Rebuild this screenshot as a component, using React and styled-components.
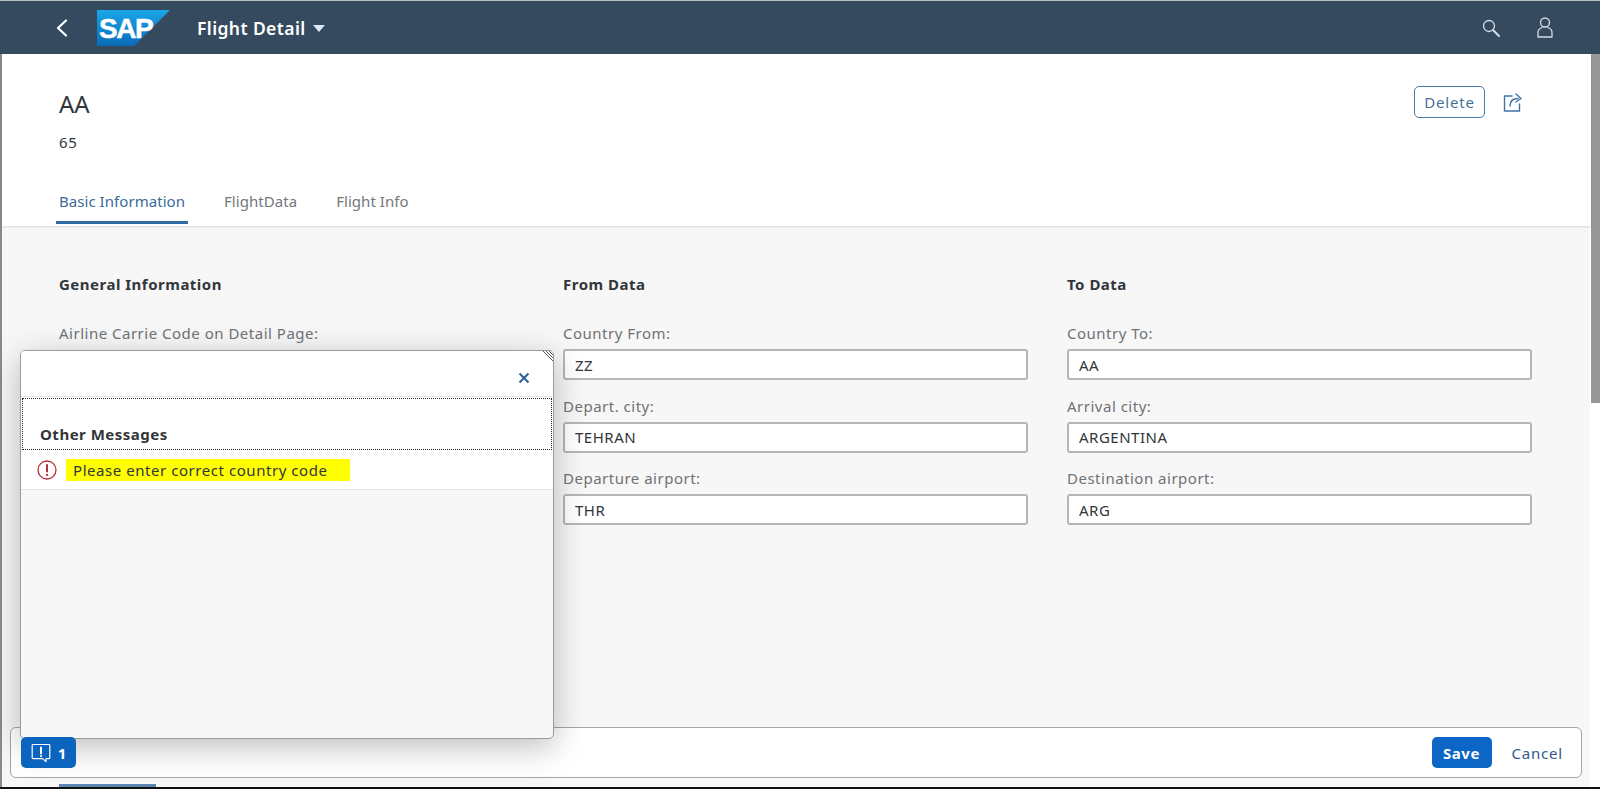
import React from "react";
import styled, { createGlobalStyle } from "styled-components";

const GlobalStyle = createGlobalStyle`
  html, body {
    margin: 0;
    padding: 0;
    background: #fff;
    overflow: hidden;
  }
  * {
    box-sizing: border-box;
  }
`;

const Shell = styled.div`
  position: relative;
  width: 1600px;
  height: 789px;
  display: flex;
  flex-direction: column;
  font-family: "Noto Sans", "Open Sans", sans-serif;
  color: #32363a;
  overflow: hidden;
  background: #fff;
  border-bottom: 2px solid #111;
`;

const TopBar = styled.header`
  height: 54px;
  flex: none;
  display: flex;
  align-items: center;
  background: #354a5f;
  border-top: 1px solid #b9c0c7;
  padding: 0 47px 0 56px;
  color: #fff;
`;

const BackIcon = styled.svg`
  width: 12px;
  height: 18px;
  margin-right: 29px;
`;

const Logo = styled.svg`
  width: 73px;
  height: 36px;
  margin-right: 27px;
`;

const AppTitle = styled.div`
  font-size: 17.5px;
  font-weight: 600;
  line-height: 24px;
  letter-spacing: 0.4px;
`;

const Caret = styled.span`
  width: 0;
  height: 0;
  margin: 2px 0 0 7px;
  border-left: 6px solid transparent;
  border-right: 6px solid transparent;
  border-top: 7px solid #dfe7f2;
`;

const TopActions = styled.div`
  margin-left: auto;
  display: flex;
  align-items: center;
  gap: 37px;
`;

const Body = styled.div`
  flex: 1;
  min-height: 0;
  display: flex;
`;

const Main = styled.main`
  flex: 1;
  min-width: 0;
  display: flex;
  flex-direction: column;
  border-left: 2px solid #8a8a8a;
`;

const ScrollTrack = styled.div`
  width: 9px;
  flex: none;
  background: #fff;
`;

const ScrollThumb = styled.div`
  height: 349px;
  background: #979797;
`;

const ObjectHeader = styled.section`
  height: 172px;
  flex: none;
  background: #fff;
  padding: 0 67px 0 54px;
  display: flex;
  flex-direction: column;
  box-shadow: 0 1px 2px rgba(0, 0, 0, 0.12);
  position: relative;
`;

const TitleRow = styled.div`
  display: flex;
  justify-content: space-between;
  padding: 33px 0 0 3px;
`;

const Title = styled.h1`
  margin: 0;
  font-size: 24px;
  font-weight: 400;
  line-height: 34px;
`;

const Subtitle = styled.div`
  font-size: 15px;
  line-height: 20px;
  margin-top: 11px;
  letter-spacing: 0.6px;
`;

const HeaderActions = styled.div`
  display: flex;
  align-items: center;
  height: 32px;
  gap: 18px;
  margin-top: -1px;
`;

const GhostButton = styled.button`
  height: 32px;
  width: 71px;
  padding: 0;
  font: inherit;
  font-size: 15px;
  letter-spacing: 0.8px;
  color: #47709b;
  background: #fff;
  border: 1.5px solid #4b7ba8;
  border-radius: 5px;
`;

const Tabs = styled.nav`
  display: flex;
  gap: 33px;
  margin-top: 35px;
`;

const Tab = styled.div`
  height: 37px;
  padding: 0 3px;
  font-size: 15px;
  line-height: 28px;
  letter-spacing: 0.05px;
  color: ${(p) => (p.$active ? "#3b6a98" : "#74777a")};
  border-bottom: 3px solid ${(p) => (p.$active ? "#2f6aa3" : "transparent")};
`;

const Content = styled.section`
  flex: 1;
  min-height: 0;
  display: flex;
  flex-direction: column;
  background: #f7f7f8;
  margin-right: 1px;
`;

const Columns = styled.div`
  display: grid;
  grid-template-columns: repeat(3, 465px);
  column-gap: 39px;
  padding: 47px 0 0 57px;
`;

const Column = styled.div`
  display: flex;
  flex-direction: column;
`;

const GroupTitle = styled.h3`
  margin: 0 0 27px;
  font-size: 15px;
  font-weight: 700;
  line-height: 22px;
  letter-spacing: 0.5px;
  color: #32363a;
`;

const Field = styled.label`
  display: flex;
  flex-direction: column;
  margin-bottom: 14.5px;
`;

const FieldLabel = styled.span`
  font-size: 15px;
  line-height: 22px;
  letter-spacing: 0.5px;
  margin-bottom: 5px;
  color: #6f7275;
`;

const Input = styled.input`
  width: 100%;
  height: 31px;
  padding: 0 10px;
  font: inherit;
  font-size: 15px;
  letter-spacing: 0.5px;
  color: #32363a;
  background: #fff;
  border: 2px solid #b4b6b8;
  border-radius: 3px;
  outline: none;
`;

const Footer = styled.footer`
  margin: auto 8px 6px 8px;
  height: 51px;
  flex: none;
  display: flex;
  align-items: center;
  padding: 0 18px 0 10px;
  background: #fff;
  border: 1px solid #a6a6a6;
  border-radius: 6px;
`;

const Sliver = styled.div`
  width: 97px;
  height: 3px;
  margin: 0 0 0 57px;
  background: #5d87b0;
`;

const MessageButton = styled.button`
  position: relative;
  z-index: 2;
  width: 55px;
  height: 31px;
  display: flex;
  align-items: center;
  justify-content: center;
  gap: 7px;
  padding: 0;
  font: inherit;
  font-size: 15px;
  font-weight: 700;
  color: #fff;
  background: #0b64bd;
  border: none;
  border-radius: 5px;
`;

const FooterActions = styled.div`
  margin-left: auto;
  display: flex;
  align-items: center;
  gap: 20px;
`;

const SaveButton = styled.button`
  width: 60px;
  height: 31px;
  padding: 0;
  font: inherit;
  font-size: 15px;
  font-weight: 700;
  letter-spacing: 0.5px;
  color: #fff;
  background: #0b66c6;
  border: none;
  border-radius: 5px;
`;

const CancelButton = styled.button`
  padding: 0;
  font: inherit;
  font-size: 15px;
  letter-spacing: 0.8px;
  color: #32598c;
  background: none;
  border: none;
`;

const Popover = styled.aside`
  position: absolute;
  z-index: 1;
  left: 20px;
  top: 350px;
  width: 534px;
  height: 389px;
  display: flex;
  flex-direction: column;
  background: #f7f7f8;
  border: 1px solid #9b9b9b;
  border-radius: 5px;
  box-shadow: 0 8px 32px rgba(0, 0, 0, 0.26);
  overflow: hidden;
`;

const Corner = styled.svg`
  position: absolute;
  top: 0;
  right: 0;
  width: 11px;
  height: 11px;
`;

const PopoverHead = styled.div`
  height: 46px;
  flex: none;
  display: flex;
  align-items: center;
  justify-content: flex-end;
  padding: 9px 23px 0 0;
  background: #fff;
  border-bottom: 1px solid #e4e4e4;
`;

const GroupFrame = styled.div`
  flex: none;
  padding: 1px 1px 0;
  background: #fff;
`;

const GroupHead = styled.div`
  height: 52px;
  display: flex;
  align-items: flex-end;
  padding: 0 0 5px 17px;
  font-size: 15px;
  font-weight: 700;
  letter-spacing: 0.5px;
  border: 1px dotted #222;
`;

const MessageItem = styled.div`
  height: 40px;
  flex: none;
  display: flex;
  align-items: center;
  padding-left: 16px;
  background: #fff;
  border-bottom: 1px solid #e5e5e5;
`;

const Highlight = styled.span`
  width: 284px;
  height: 22px;
  margin-left: 9px;
  padding-left: 7px;
  font-size: 15px;
  line-height: 22px;
  letter-spacing: 0.55px;
  color: #32363a;
  background: #ffff00;
`;

const stroke = { fill: "none", strokeLinecap: "round", strokeLinejoin: "round" };

const SearchIcon = () => (
  <svg width="18" height="18" viewBox="0 0 18 18" {...stroke} stroke="#d5dde6" strokeWidth="1.3">
    <circle cx="7" cy="7" r="5.5" />
    <path d="M11 11l6 6" strokeWidth="2" />
  </svg>
);

const UserIcon = () => (
  <svg width="16" height="21" viewBox="0 0 16 21" {...stroke} stroke="#d5dde6" strokeWidth="1.3">
    <circle cx="8" cy="5.5" r="4.5" />
    <path d="M5 10.5C2.5 11.5 1 13 1 15.5V20h14v-4.5c0-2.5-1.5-4-4-5" />
  </svg>
);

const ShareIcon = () => (
  <svg width="21" height="19" viewBox="0 0 21 19" {...stroke} stroke="#3f74a6" strokeWidth="1.4">
    <path d="M9 3H1.5v15h15v-7" />
    <path d="M7 13c0-5 3-7.5 8-7.5" />
    <path d="M13 1l5 4.5L13 9" />
  </svg>
);

const MessageIcon = () => (
  <svg width="20" height="20" viewBox="0 0 20 20" {...stroke} stroke="#fff" strokeWidth="1.2">
    <path d="M2 1.5h16a.8.8 0 0 1 .8.8v12.5a.8.8 0 0 1-.8.8h-3v3l-3.5-3H2a.8.8 0 0 1-.8-.8V2.3a.8.8 0 0 1 .8-.8z" />
    <path d="M10 4.5v6" strokeWidth="2" />
    <path d="M10 13v.3" strokeWidth="2" />
  </svg>
);

const ErrorIcon = () => (
  <svg width="20" height="20" viewBox="0 0 20 20" {...stroke} stroke="#b5303a">
    <circle cx="10" cy="10" r="9" strokeWidth="1.3" />
    <path d="M10 5v6.5" strokeWidth="2" />
    <path d="M10 14.8v.2" strokeWidth="2.2" />
  </svg>
);

const App = () => (
  <>
    <GlobalStyle />
    <Shell>
      <TopBar>
        <BackIcon viewBox="0 0 12 18" {...stroke} stroke="#fff" strokeWidth="2.2">
          <path d="M10 1.5L2 9l8 7.5" />
        </BackIcon>
        <Logo viewBox="0 0 73 36">
          <defs>
            <linearGradient id="sapBlue" x1="0" y1="0" x2="0" y2="1">
              <stop offset="0" stopColor="#1aa7e8" />
              <stop offset="1" stopColor="#0a6ab8" />
            </linearGradient>
          </defs>
          <polygon points="0,0 73,0 37,36 0,36" fill="url(#sapBlue)" />
          <text
            x="2"
            y="28"
            fontFamily="'Liberation Sans', sans-serif"
            fontSize="28"
            fontWeight="700"
            letterSpacing="-1.5"
            fill="#fff"
            stroke="#fff"
            strokeWidth="0.5"
          >
            SAP
          </text>
        </Logo>
        <AppTitle>Flight Detail</AppTitle>
        <Caret />
        <TopActions>
          <SearchIcon />
          <UserIcon />
        </TopActions>
      </TopBar>
      <Body>
        <Main>
          <ObjectHeader>
            <TitleRow>
              <div>
                <Title>AA</Title>
                <Subtitle>65</Subtitle>
              </div>
              <HeaderActions>
                <GhostButton>Delete</GhostButton>
                <ShareIcon />
              </HeaderActions>
            </TitleRow>
            <Tabs>
              <Tab $active>Basic Information</Tab>
              <Tab>FlightData</Tab>
              <Tab>Flight Info</Tab>
            </Tabs>
          </ObjectHeader>
          <Content>
            <Columns>
              <Column>
                <GroupTitle>General Information</GroupTitle>
                <Field>
                  <FieldLabel>Airline Carrie Code on Detail Page:</FieldLabel>
                </Field>
              </Column>
              <Column>
                <GroupTitle>From Data</GroupTitle>
                <Field>
                  <FieldLabel>Country From:</FieldLabel>
                  <Input readOnly value="ZZ" />
                </Field>
                <Field>
                  <FieldLabel>Depart. city:</FieldLabel>
                  <Input readOnly value="TEHRAN" />
                </Field>
                <Field>
                  <FieldLabel>Departure airport:</FieldLabel>
                  <Input readOnly value="THR" />
                </Field>
              </Column>
              <Column>
                <GroupTitle>To Data</GroupTitle>
                <Field>
                  <FieldLabel>Country To:</FieldLabel>
                  <Input readOnly value="AA" />
                </Field>
                <Field>
                  <FieldLabel>Arrival city:</FieldLabel>
                  <Input readOnly value="ARGENTINA" />
                </Field>
                <Field>
                  <FieldLabel>Destination airport:</FieldLabel>
                  <Input readOnly value="ARG" />
                </Field>
              </Column>
            </Columns>
            <Footer>
              <MessageButton>
                <MessageIcon />1
              </MessageButton>
              <FooterActions>
                <SaveButton>Save</SaveButton>
                <CancelButton>Cancel</CancelButton>
              </FooterActions>
            </Footer>
            <Sliver />
          </Content>
        </Main>
        <ScrollTrack>
          <ScrollThumb />
        </ScrollTrack>
      </Body>
      <Popover>
        <Corner viewBox="0 0 11 11" stroke="#555" strokeWidth="1">
          <path d="M1 0l10 10M4 0l7 7M7 0l4 4" />
        </Corner>
        <PopoverHead>
          <svg width="12" height="12" viewBox="0 0 12 12" stroke="#2b6299" strokeWidth="2">
            <path d="M1.5 1.5l9 9M10.5 1.5l-9 9" />
          </svg>
        </PopoverHead>
        <GroupFrame>
          <GroupHead>Other Messages</GroupHead>
        </GroupFrame>
        <MessageItem>
          <ErrorIcon />
          <Highlight>Please enter correct country code</Highlight>
        </MessageItem>
      </Popover>
    </Shell>
  </>
);

export default App;
